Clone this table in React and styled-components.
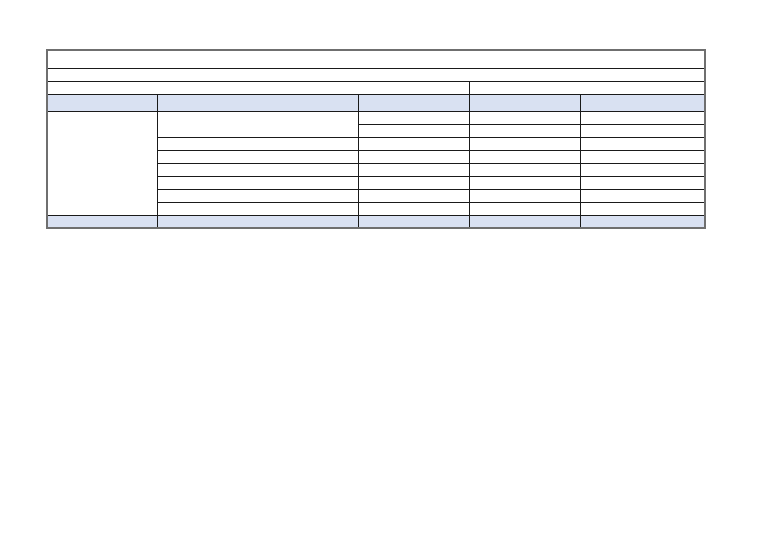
import React from "react";
import styled, { createGlobalStyle } from "styled-components";

const Global = createGlobalStyle`
  html, body {
    margin: 0;
    padding: 0;
    background: #ffffff;
    font-family: "Liberation Sans", Arial, sans-serif;
  }
`;

const Page = styled.div`
  width: 768px;
  height: 543px;
  padding: 49px 0 0 46px;
  box-sizing: border-box;
`;

const Sheet = styled.table`
  width: 658px;
  table-layout: fixed;
  border-collapse: collapse;
  border: 2px solid #6f6f6f;
  font-size: 9px;
`;

const Row = styled.tr`
  height: ${(p) => p.$h || 13}px;
`;

const Cell = styled.td`
  border: 1px solid #1a1a1a;
  padding: 0;
  background: ${(p) => (p.$fill ? "#d9e1f2" : "#ffffff")};
`;

const widths = [110, 201, 111, 111, 125];

// rows under the blue header, beside the tall first-column cell
const tailRows = 6;

export default function App() {
  return (
    <Page>
      <Global />
      <Sheet>
        <colgroup>
          {widths.map((w, i) => (
            <col key={i} style={{ width: w }} />
          ))}
        </colgroup>
        <tbody>
          <Row $h={18}>
            <Cell colSpan={5} />
          </Row>
          <Row>
            <Cell colSpan={5} />
          </Row>
          <Row>
            <Cell colSpan={3} />
            <Cell colSpan={2} />
          </Row>
          <Row $h={17}>
            <Cell $fill />
            <Cell $fill />
            <Cell $fill />
            <Cell $fill />
            <Cell $fill />
          </Row>
          <Row>
            <Cell rowSpan={tailRows + 2} />
            <Cell rowSpan={2} />
            <Cell />
            <Cell />
            <Cell />
          </Row>
          <Row>
            <Cell />
            <Cell />
            <Cell />
          </Row>
          {Array.from({ length: tailRows }).map((_, i) => (
            <Row key={i}>
              <Cell />
              <Cell />
              <Cell />
              <Cell />
            </Row>
          ))}
          <Row>
            <Cell $fill />
            <Cell $fill />
            <Cell $fill />
            <Cell $fill />
            <Cell $fill />
          </Row>
        </tbody>
      </Sheet>
    </Page>
  );
}
